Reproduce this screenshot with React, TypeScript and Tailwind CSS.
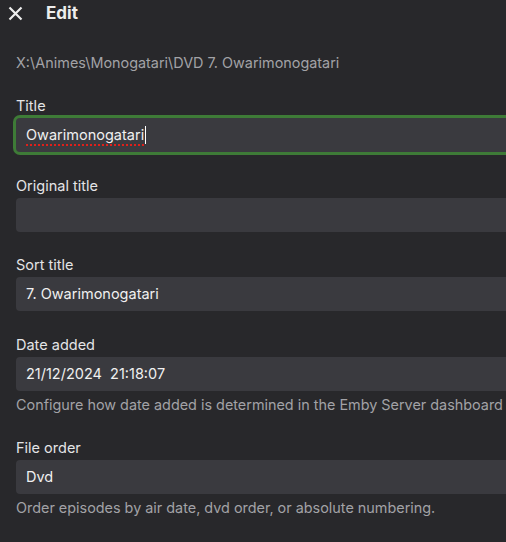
import React from 'react';

type Field = {
  label: string;
  value: string;
  help?: string;
  focused?: boolean;
};

const fields: Field[] = [
  { label: 'Title', value: 'Owarimonogatari', focused: true },
  { label: 'Original title', value: '' },
  { label: 'Sort title', value: '7. Owarimonogatari' },
  {
    label: 'Date added',
    value: '21/12/2024  21:18:07',
    help: 'Configure how date added is determined in the Emby Server dashboard',
  },
  {
    label: 'File order',
    value: 'Dvd',
    help: 'Order episodes by air date, dvd order, or absolute numbering.',
  },
];

function FieldRow({ label, value, help, focused }: Field) {
  return (
    <div className="flex flex-col">
      <label className="h-5 text-[14.5px] leading-5 text-[#e4e4e6]">{label}</label>
      <div
        className={
          'mt-[2px] flex h-[34px] items-center rounded-[4px] bg-[#3a3a3f] pl-[10px] text-[14.5px] text-[#f0f0f0] ' +
          (focused ? 'ring-[3px] ring-[#3e7b37]' : '')
        }
      >
        {focused ? (
          <>
            <span className="underline decoration-[#e0201b] decoration-dotted decoration-2 underline-offset-[4px]">
              {value}
            </span>
            <span className="ml-[1px] h-[18px] w-[1px] bg-white" />
          </>
        ) : (
          <span className="whitespace-pre">{value}</span>
        )}
      </div>
      {help && <p className="mt-1 h-5 text-[14.4px] leading-5 text-[#a2a2a6]">{help}</p>}
    </div>
  );
}

export default function App() {
  return (
    <div
      className="h-[542px] w-[506px] overflow-hidden bg-[#28282b]"
      style={{ fontFamily: 'Inter, "Noto Sans", sans-serif' }}
    >
      <div className="flex h-[27px] items-center">
        <button className="ml-[7px] flex h-4 w-4 items-center justify-center text-[#ededed]">
          <svg width="15" height="15" viewBox="0 0 15 15" fill="none" stroke="currentColor" strokeWidth="2.2">
            <path d="M1.5 1.5 L13.5 13.5 M13.5 1.5 L1.5 13.5" />
          </svg>
        </button>
        <h1 className="ml-[23px] text-[17px] font-bold text-[#ededed]">Edit</h1>
      </div>
      <div className="w-[620px] px-4">
        <p className="mt-[26px] h-5 text-[14.4px] leading-5 text-[#a2a2a6]">
          X:\Animes\Monogatari\DVD 7. Owarimonogatari
        </p>
        <div className="mt-[23px] flex flex-col gap-[23.5px]">
          {fields.map((f) => (
            <FieldRow key={f.label} {...f} />
          ))}
        </div>
      </div>
    </div>
  );
}
